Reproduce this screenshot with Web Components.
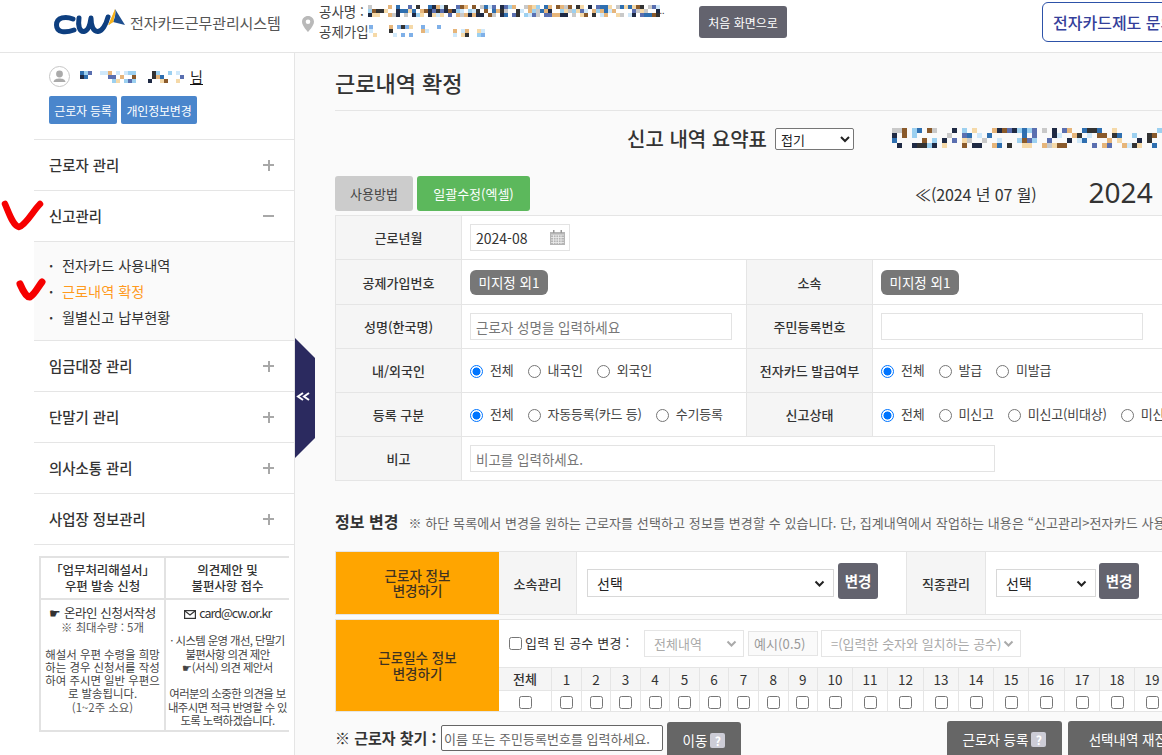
<!DOCTYPE html>
<html lang="ko"><head><meta charset="utf-8"><title>근로내역 확정</title>
<style>
html,body{margin:0;padding:0;width:1162px;height:755px;overflow:hidden;background:#fff;font-family:"Noto Sans CJK KR","Noto Sans",sans-serif;color:#333}
</style></head><body>
<app-header></app-header>
<app-shell></app-shell>
<script>
const FONT='"Noto Sans CJK KR","Noto Sans",sans-serif';
function seeded(s){return ()=>(s=(s*16807)%2147483647)/2147483647}
class XMosaic extends HTMLElement{
  connectedCallback(){
    const w=+this.getAttribute('w'),h=+this.getAttribute('h'),c=+(this.getAttribute('cell')||5),r=seeded(+(this.getAttribute('seed')||7));
    const density=+(this.getAttribute('density')||.55);
    const pal=(this.getAttribute('pal')||'#1f2a44,#333,#8a5a2b,#9cd0f0,#f5d9a8,#cfe8fa,#5a6fb0,#c9c9c9,#e6b57a,#2f6fb0').split(',');
    let s='';
    for(let y=0;y<h;y+=c)for(let x=0;x<w;x+=c){if(r()<density)s+=`<rect x="${x}" y="${y}" width="${c}" height="${c}" fill="${pal[Math.floor(r()*pal.length)]}"/>`}
    this.attachShadow({mode:'open'}).innerHTML=`<style>:host{display:inline-block;width:${w}px;height:${h}px;line-height:0;vertical-align:middle}</style><svg width="${w}" height="${h}" shape-rendering="crispEdges">${s}</svg>`;
  }
}
customElements.define('x-mosaic',XMosaic);

class AppHeader extends HTMLElement{
  constructor(){super();this.attachShadow({mode:'open'}).innerHTML=`<style>
  :host{display:flex;align-items:flex-start;height:52px;border-bottom:1px solid #e5e5e5;background:#fff;font-family:${FONT};box-sizing:content-box;position:relative;overflow:hidden}
  .logo{margin:8px 0 0 54px;width:73px;height:28px;flex:none}
  .name{font-size:15px;color:#555;margin:12px 0 0 3px;line-height:22px;letter-spacing:-.1px;white-space:nowrap;width:170px;flex:none}
  .pin{margin:16px 0 0 2px;flex:none;width:12px;height:16px}
  .info{margin:1px 0 0 5px;width:380px;flex:none;font-size:13.500px;line-height:20px;color:#444}
  .info div{white-space:nowrap;display:flex;align-items:center;height:20px}
  .btn{margin:6px 0 0 0;width:88px;height:32px;box-sizing:border-box;background:#63636e;color:#fff;border-radius:3px;font-size:12px;display:flex;align-items:center;justify-content:center;flex:none}
  .sys{margin:2px 0 0 255px;flex:none;width:170px;height:40px;box-sizing:border-box;border:1px solid #2d52a8;border-radius:6px;color:#34409a;font-size:16px;font-weight:500;padding:0 10px;display:flex;align-items:center;white-space:nowrap;overflow:visible}
  </style>
  <svg class="logo" viewBox="0 0 73 28"><g fill="none" stroke="#0e3f80" stroke-width="5" stroke-linecap="round" stroke-linejoin="round"><path d="M19 11C12 8 2.500 9 2.500 17C2.500 25 12 25 20 22"/><path d="M25 10C24 17 25 24 30 23.500C34 23 36 17 37 10C37 17 39 24 44 23.500C48 23 52 17 54 9"/></g><path d="M61 1L71 17L59 14C61 10 62 5 61 1Z" fill="#1d4e8f"/><path d="M61 1C62 6 61 11 55 17C54 17.500 55 15 56 13C58 9 60 5 61 1Z" fill="#f7b21b"/><path d="M61 1L59.500 14L54.500 17Z" fill="#f7b21b"/></svg>
  <div class="name">전자카드근무관리시스템</div>
  <svg class="pin" viewBox="0 0 12 16"><path d="M6 0C2.600 0 0 2.600 0 5.800C0 10 6 16 6 16S12 10 12 5.800C12 2.600 9.400 0 6 0ZM6 8A2.300 2.300 0 1 1 6 3.400A2.300 2.300 0 0 1 6 8Z" fill="#b9b9b9"/></svg>
  <div class="info"><div>공사명 :&nbsp;<x-mosaic w="292" h="12" cell="4" seed="13" density=".75"></x-mosaic><span style="font-size:9px">..</span></div><div>공제가입<x-mosaic w="120" h="12" cell="4" seed="91" density=".3" pal="#f5d9a8,#cfe8fa,#9cd0f0,#333,#e6b57a,#7fb0e8"></x-mosaic></div></div>
  <div class="btn">처음 화면으로</div>
  <div class="sys">전자카드제도 문의</div>`}
}
customElements.define('app-header',AppHeader);

class SideItem extends HTMLElement{
  constructor(){super();const open=this.hasAttribute('open');this.attachShadow({mode:'open'}).innerHTML=`<style>
  :host{display:block;border-top:1px solid #e5e5e5;font-family:${FONT}}
  .h{height:50px;box-sizing:border-box;padding:0 20px 2px 15px;display:flex;align-items:center;justify-content:space-between;font-size:14.400px;color:#333;font-weight:500}
  .i{width:11px;height:11px;position:relative;flex:none;top:1px}
  .i:before,.i:after{content:"";position:absolute;background:#a8a8a8}
  .i:before{left:0;right:0;top:4.500px;height:2px}
  .i:after{top:0;bottom:0;left:4.500px;width:2px}
  .open .i:after{display:none}
  ::slotted(*){display:block}
  </style><div class="h ${open?'open':''}"><span>${this.getAttribute('label')}</span><span class="i"></span></div><slot></slot>`}
}
customElements.define('side-item',SideItem);

class SubMenu extends HTMLElement{
  constructor(){super();this.attachShadow({mode:'open'}).innerHTML=`<style>
  :host{display:block;background:#fafafa;border-top:1px solid #e5e5e5;padding:10px 0 10px 15px;font-family:${FONT};font-size:14.200px;color:#333}
  div{height:26px;line-height:26px;white-space:nowrap}
  .on{color:#ff9a1e}
  b{font-weight:700;color:#333;display:inline-block;width:13px;font-size:13px}
  </style><div><b>·</b>전자카드 사용내역</div><div class="on"><b>·</b>근로내역 확정</div><div><b>·</b>월별신고 납부현황</div>`}
}
customElements.define('sub-menu',SubMenu);

class InfoBox extends HTMLElement{
  constructor(){super();this.attachShadow({mode:'open'}).innerHTML=`<style>
  :host{display:grid;grid-template-columns:123px 123px;grid-template-rows:40px 130px;gap:2px;width:250px;box-sizing:border-box;margin:11px 0 0 5px;padding:2px;background:#e2e2e2;font-family:${FONT};font-size:11.400px;line-height:13.300px;color:#444;text-align:center;white-space:nowrap}
  div{background:#fff}
  .t{font-size:12.500px;font-weight:500;line-height:16px;display:flex;align-items:center;justify-content:center;letter-spacing:-.1px;color:#333}
  .c{padding:5px 0 0;overflow:hidden}
  .m{font-size:12.500px;line-height:16px;color:#333;letter-spacing:-.4px}
  .r{letter-spacing:-.6px}
  .r .m{letter-spacing:-1px}
  svg{vertical-align:-1px;margin-right:1px}
  .g{color:#555}
  </style>
  <div class="t">「업무처리해설서」<br>우편 발송 신청</div><div class="t">의견제안 및<br>불편사항 접수</div>
  <div class="c"><div class="m">☛ 온라인 신청서작성</div><div class="g">※ 최대수량 : 5개</div><br>해설서 우편 수령을 희망<br>하는 경우 신청서를 작성<br>하여 주시면 일반 우편으<br>로 발송됩니다.<br><span class="g">(1~2주 소요)</span></div>
  <div class="c r"><div class="m"><svg width="12" height="9" viewBox="0 0 12 9"><rect x=".6" y=".6" width="10.800" height="7.800" fill="none" stroke="#333" stroke-width="1.200"/><path d="M1 1L6 5L11 1" fill="none" stroke="#333" stroke-width="1.200"/></svg> card@cw.or.kr</div><br>· 시스템 운영 개선, 단말기<br>불편사항 의견 제안<br>☛(서식) 의견 제안서<br><br>여러분의 소중한 의견을 보<br>내주시면 적극 반영할 수 있<br>도록 노력하겠습니다.</div>`}
}
customElements.define('info-box',InfoBox);

class AppSidebar extends HTMLElement{
  constructor(){super();this.attachShadow({mode:'open'}).innerHTML=`<style>
  :host{display:block;width:261px;margin-left:34px;box-sizing:border-box;border-right:1px solid #e5e5e5;background:#fff;flex:none;height:702px;position:relative;font-family:${FONT}}
  .u{height:86px;box-sizing:border-box;padding:13px 0 0 15px}
  .n{display:flex;align-items:center;height:21px;font-size:14px;color:#222}
  .bs{display:flex;gap:4px;margin-top:9px}
  .b{height:28px;background:#4a86cc;color:#fff;border-radius:2px;font-size:12px;display:flex;align-items:center;justify-content:center;letter-spacing:-.2px}
  .tog{position:absolute;left:261px;top:285px;width:20px;height:120px}
  </style>
  <div class="u"><div class="n"><svg width="21" height="21" viewBox="0 0 21 21" style="margin-right:10px"><circle cx="10.500" cy="10.500" r="10" fill="#fff" stroke="#c6c6c6"/><circle cx="10.500" cy="8" r="3.400" fill="#aaa"/><path d="M4.500 16C5 13 8 12.500 10.500 12.500S16 13 16.500 16Z" fill="#aaa"/></svg><x-mosaic w="104" h="12" cell="4" seed="53" density=".35"></x-mosaic><span style="margin-left:6px;border-bottom:1px solid #111;line-height:15px">님</span></div>
  <div class="bs"><div class="b" style="width:68px">근로자 등록</div><div class="b" style="width:76px">개인정보변경</div></div></div>
  <side-item label="근로자 관리"></side-item>
  <side-item label="신고관리" open><sub-menu></sub-menu></side-item>
  <side-item label="임금대장 관리"></side-item>
  <side-item label="단말기 관리"></side-item>
  <side-item label="의사소통 관리"></side-item>
  <side-item label="사업장 정보관리"></side-item>
  <div style="border-top:1px solid #e5e5e5"></div>
  <info-box></info-box>
  <svg class="tog" viewBox="0 0 20 120"><path d="M0 0L20 20V100L0 120Z" fill="#2b2a5f"/><path d="M8 55L3 58.500L8 62M14 55L9 58.500L14 62" fill="none" stroke="#fff" stroke-width="2"/></svg>`}
}
customElements.define('app-sidebar',AppSidebar);

const fieldCss=`
  .lb{background:#f5f5f5;display:flex;align-items:center;justify-content:center;font-size:13px;font-weight:500;color:#333;border-right:1px solid #e5e5e5;border-bottom:1px solid #e5e5e5;box-sizing:border-box}
  .v{background:#fff;display:flex;align-items:center;padding-left:8px;border-right:1px solid #e5e5e5;border-bottom:1px solid #e5e5e5;box-sizing:border-box;font-size:13px;color:#444;white-space:nowrap;overflow:hidden}
  .inp{border:1px solid #e3e3e3;height:27px;box-sizing:border-box;background:#fff;display:flex;align-items:center;padding-left:5px;font-size:13.500px;color:#777}
  .chip{background:#777;color:#fff;border-radius:6px;height:25px;width:78px;display:flex;align-items:center;justify-content:center;font-size:13.500px}
  .r{width:13px;height:13px;border-radius:50%;border:1px solid #767676;box-sizing:border-box;margin:0 7px 0 0;flex:none;background:#fff;position:relative;top:1px}
  .r.on{border:1.500px solid #0075ff;background:radial-gradient(circle,#0075ff 0 3.700px,#fff 4.300px)}
  .o{margin-right:14px;position:relative;top:-1.500px;letter-spacing:-.2px}
`;
class FilterTable extends HTMLElement{
  constructor(){super();
  const rad=(items)=>items.map((t,i)=>`<span class="r ${i==0?'on':''}"></span><span class="o">${t}</span>`).join('');
  this.attachShadow({mode:'open'}).innerHTML=`<style>
  :host{display:grid;grid-template-columns:126px 285px 126px 421px;grid-template-rows:44px 45px 44px 44px 44px 44px;width:958px;box-sizing:border-box;border-top:1px solid #e5e5e5;border-left:1px solid #e5e5e5;font-family:${FONT}}
  ${fieldCss}
  .w{grid-column:2/5}
  </style>
  <div class="lb">근로년월</div>
  <div class="v w"><div class="inp" style="width:100px;color:#333;font-size:14px;justify-content:space-between;padding-right:4px">2024-08<svg width="15" height="15" viewBox="0 0 15 15"><path d="M0 2H15V15H0Z" fill="#b5b5b5"/><path d="M3 0h1.500v3H3zM10.500 0H12v3h-1.500z" fill="#999"/><path d="M1 5H14M1 7.500H14M1 10H14M1 12.500H14M3.500 5V14M6 5V14M8.500 5V14M11 5V14" stroke="#eee" stroke-width=".8"/></svg></div></div>
  <div class="lb">공제가입번호</div><div class="v"><span class="chip">미지정 외1</span></div>
  <div class="lb">소속</div><div class="v"><span class="chip">미지정 외1</span></div>
  <div class="lb">성명(한국명)</div><div class="v"><div class="inp" style="width:262px">근로자 성명을 입력하세요</div></div>
  <div class="lb">주민등록번호</div><div class="v"><div class="inp" style="width:262px"></div></div>
  <div class="lb">내/외국인</div><div class="v">${rad(['전체','내국인','외국인'])}</div>
  <div class="lb">전자카드 발급여부</div><div class="v">${rad(['전체','발급','미발급'])}</div>
  <div class="lb">등록 구분</div><div class="v">${rad(['전체','자동등록(카드 등)','수기등록'])}</div>
  <div class="lb">신고상태</div><div class="v">${rad(['전체','미신고','미신고(비대상)','미신고(대상)'])}</div>
  <div class="lb">비고</div><div class="v w"><div class="inp" style="width:525px">비고를 입력하세요.</div></div>`}
}
customElements.define('filter-table',FilterTable);

const chev=c=>`<svg width="11" height="7" viewBox="0 0 11 7" style="flex:none"><path d="M1.500 1.500L5.500 5.500L9.500 1.500" fill="none" stroke="${c}" stroke-width="2"/></svg>`;
class EditTable extends HTMLElement{
  constructor(){super();
  const days=[53,30,29,30,29,30,29,30,29.500,29.500,35,35,36,35,35,35,36,35,35,35];
  const labels=['전체',...Array.from({length:19},(_,i)=>i+1),'20'];
  const box=`<span class="cb"></span>`;
  this.attachShadow({mode:'open'}).innerHTML=`<style>
  :host{display:block;width:958px;font-family:${FONT};font-size:13px;color:#333}
  ${fieldCss}
  .row{display:flex;border:1px solid #e5e5e5;border-right:0;box-sizing:border-box}
  .org{width:163px;background:orange;display:flex;align-items:center;justify-content:center;text-align:center;line-height:15.500px;font-size:13.500px;font-weight:500;color:#3f3320;flex:none}
  .lb2{background:#f5f5f5;display:flex;align-items:center;justify-content:center;font-weight:500;font-size:13px;border-right:1px solid #e5e5e5;flex:none;box-sizing:border-box}
  .sel{height:28px;border:1px solid #d8d8d8;background:#fff;box-sizing:border-box;display:flex;align-items:center;justify-content:space-between;padding:0 8px 0 9px;font-size:14px;color:#222;flex:none}
  .go{width:40px;height:36px;background:#63636e;color:#fff;font-weight:700;font-size:14.500px;border-radius:3px;display:flex;align-items:center;justify-content:center;margin:-5px 0 0 4px;flex:none}
  .top{height:48px;border-bottom:1px solid #e5e5e5;box-sizing:border-box;display:flex;align-items:center;background:#fff;padding-left:10px}
  .cb{width:13px;height:13px;border:1px solid #767676;border-radius:2.500px;box-sizing:border-box;background:#fff;display:block}
  .gs{display:flex;background:#fff}
  .gs span.c{display:flex;align-items:center;justify-content:center;box-sizing:border-box;border-right:1px solid #e5e5e5;flex:none}
  .hd{height:22px;background:#f5f5f5;border-bottom:1px solid #e5e5e5;font-size:13.500px}
  .hd span.c{padding-bottom:1px}
  .hd .c:first-child{font-weight:500;font-size:13px}
  .bd{height:22px}
  .dis{height:27px;border:1px solid #e5e5e5;box-sizing:border-box;display:flex;align-items:center;justify-content:space-between;color:#aaa;font-size:13px;background:#fff;flex:none;padding:0 6px 0 9px}
  </style>
  <div class="row" style="height:64px">
    <div class="org">근로자 정보<br>변경하기</div>
    <div class="lb2" style="width:78px">소속관리</div>
    <div style="width:330px;background:#fff;display:flex;align-items:center;padding-left:10px;border-right:1px solid #e5e5e5;box-sizing:border-box;flex:none">
      <div class="sel" style="width:247px">선택${chev('#222')}</div><div class="go">변경</div></div>
    <div class="lb2" style="width:79px">직종관리</div>
    <div style="flex:1;background:#fff;display:flex;align-items:center;padding-left:10px">
      <div class="sel" style="width:100px">선택${chev('#222')}</div><div class="go" style="margin-left:3px">변경</div></div>
  </div>
  <div class="row" style="margin-top:4px;height:93px">
    <div class="org">근로일수 정보<br>변경하기</div>
    <div style="flex:1;overflow:hidden">
      <div class="top"><span class="cb"></span><span style="margin-left:3px;width:119px;flex:none;letter-spacing:.2px;position:relative;top:-1px;white-space:nowrap">입력 된 공수 변경 :</span>
        <div class="dis" style="width:100px">전체내역${chev('#aaa')}</div>
        <div class="dis" style="width:70px;height:25px;margin-left:4px;background:#fafafa;padding:0 5px;color:#999;letter-spacing:.1px">예시(0.5)</div>
        <div class="dis" style="width:200px;margin-left:3px;white-space:nowrap">=(입력한 숫자와 일치하는 공수)${chev('#aaa')}</div>
      </div>
      <div class="gs hd">${labels.map((l,i)=>`<span class="c" style="width:${days[i]}px">${l}</span>`).join('')}</div>
      <div class="gs bd">${labels.map((l,i)=>`<span class="c" style="width:${days[i]}px">${box}</span>`).join('')}</div>
    </div>
  </div>`}
}
customElements.define('edit-table',EditTable);

class DarkBtn extends HTMLElement{
  constructor(){super();this.attachShadow({mode:'open'}).innerHTML=`<style>
  :host{display:flex;align-items:center;justify-content:center;gap:3px;height:36px;background:#666;color:#fff;border-radius:3px;font-size:13.500px;font-family:${FONT};flex:none;white-space:nowrap;box-sizing:border-box}
  i{font-style:normal;width:15px;height:15px;background:#ccccd6;color:#fff;border-radius:2px;font-size:12px;font-weight:700;display:flex;align-items:center;justify-content:center}
  </style><slot></slot>${this.hasAttribute('help')?'<i>?</i>':''}`}
}
customElements.define('dark-btn',DarkBtn);

class AppMain extends HTMLElement{
  constructor(){super();this.attachShadow({mode:'open'}).innerHTML=`<style>
  :host{display:block;flex:1;min-width:0;background:#fafafa;height:702px;overflow:hidden;font-family:${FONT};color:#333;box-sizing:border-box;padding-left:40px}
  .inner{width:960px}
  h1{font-size:22px;font-weight:500;margin:0;height:58px;box-sizing:border-box;padding-top:14px;line-height:30px;color:#333;border-bottom:1px solid #e5e5e5}
  .sum{display:flex;align-items:center;height:40px;margin-top:7px;padding-left:292px;font-size:20px;font-weight:500;white-space:nowrap;color:#333}
  select{margin:2px 0 0 8px;width:79px;height:22px;font-size:13px;font-family:${FONT};background:#fff;border:1px solid #767676;border-radius:2px;padding:0 0 0 1px;color:#222}
  .tb{display:flex;align-items:flex-end;height:35px;margin-top:18px}
  .b{height:35px;border-radius:3px;display:flex;align-items:center;justify-content:center;font-size:13px}
  .pre{margin-left:385px;font-size:16px;align-self:center;white-space:nowrap;color:#333;letter-spacing:-.1px}
  .yr{margin:-3px 0 0 52px;font-size:28px;align-self:center;line-height:35px;color:#333;font-family:"Noto Sans",sans-serif;white-space:nowrap}
  .sec{display:flex;align-items:baseline;height:28px;margin-top:28px;white-space:nowrap;margin-bottom:14px}
  .sec b{font-size:16px;font-weight:700;margin-right:10px}
  .sec span{font-size:13px;color:#666;letter-spacing:.1px}
  .find{display:flex;align-items:flex-start;margin-top:10px;font-size:15px;font-weight:700;white-space:nowrap}
  .find .in{width:222px;height:26px;box-sizing:border-box;border:1px solid #666;border-radius:2px;background:#fff;margin:3px 4px 0 3px;font-size:13px;font-weight:400;color:#666;display:flex;align-items:center;padding-left:2px;overflow:hidden}
  .find .lb{line-height:32px;width:103px;flex:none}
  </style>
  <div class="inner">
  <h1>근로내역 확정</h1>
  <div class="sum">신고 내역 요약표<select><option>접기</option></select><x-mosaic w="280" h="20" cell="5" seed="211" density=".5" style="margin-left:38px"></x-mosaic></div>
  <div class="tb"><div class="b" style="width:78px;background:#ccc;color:#444">사용방법</div><div class="b" style="width:113px;margin-left:4px;background:#5cb85c;color:#fff">일괄수정(엑셀)</div>
    <span class="pre">≪(2024 년 07 월)</span><span class="yr">2024 년</span></div>
  <div style="height:4px"></div>
  <filter-table></filter-table>
  <div class="sec"><b>정보 변경</b><span>※ 하단 목록에서 변경을 원하는 근로자를 선택하고 정보를 변경할 수 있습니다. 단, 집계내역에서 작업하는 내용은 “신고관리&gt;전자카드 사용내역”</span></div>
  <edit-table></edit-table>
  <div class="find"><span class="lb">※ 근로자 찾기 :</span><div class="in">이름 또는 주민등록번호를 입력하세요.</div>
    <dark-btn help style="width:74px;font-weight:400">이동</dark-btn>
    <dark-btn help style="width:115px;margin:-1px 0 0 206px;font-weight:400">근로자 등록</dark-btn>
    <dark-btn help style="width:150px;margin:-1px 0 0 6px;font-weight:400">선택내역 재집계</dark-btn></div>
  </div>`}
}
customElements.define('app-main',AppMain);

class AppShell extends HTMLElement{
  constructor(){super();this.attachShadow({mode:'open'}).innerHTML=`<style>
  :host{display:flex;position:relative;width:1162px;height:702px;overflow:hidden}
  .mark{position:absolute;left:0;top:0;pointer-events:none}
  </style><app-sidebar></app-sidebar><app-main></app-main>
  <svg class="mark" width="60" height="260" viewBox="0 0 60 260"><g fill="none" stroke="#f60000" stroke-linecap="round" stroke-linejoin="round"><path stroke-width="6.500" d="M5 151C9 160 13 173 19 174C26 172 33 158 40 151"/><path stroke-width="7" d="M20 231C23 238 27 245 30 244C35 241 38 234 42 229"/></g></svg>`}
}
customElements.define('app-shell',AppShell);
</script>
</body></html>
